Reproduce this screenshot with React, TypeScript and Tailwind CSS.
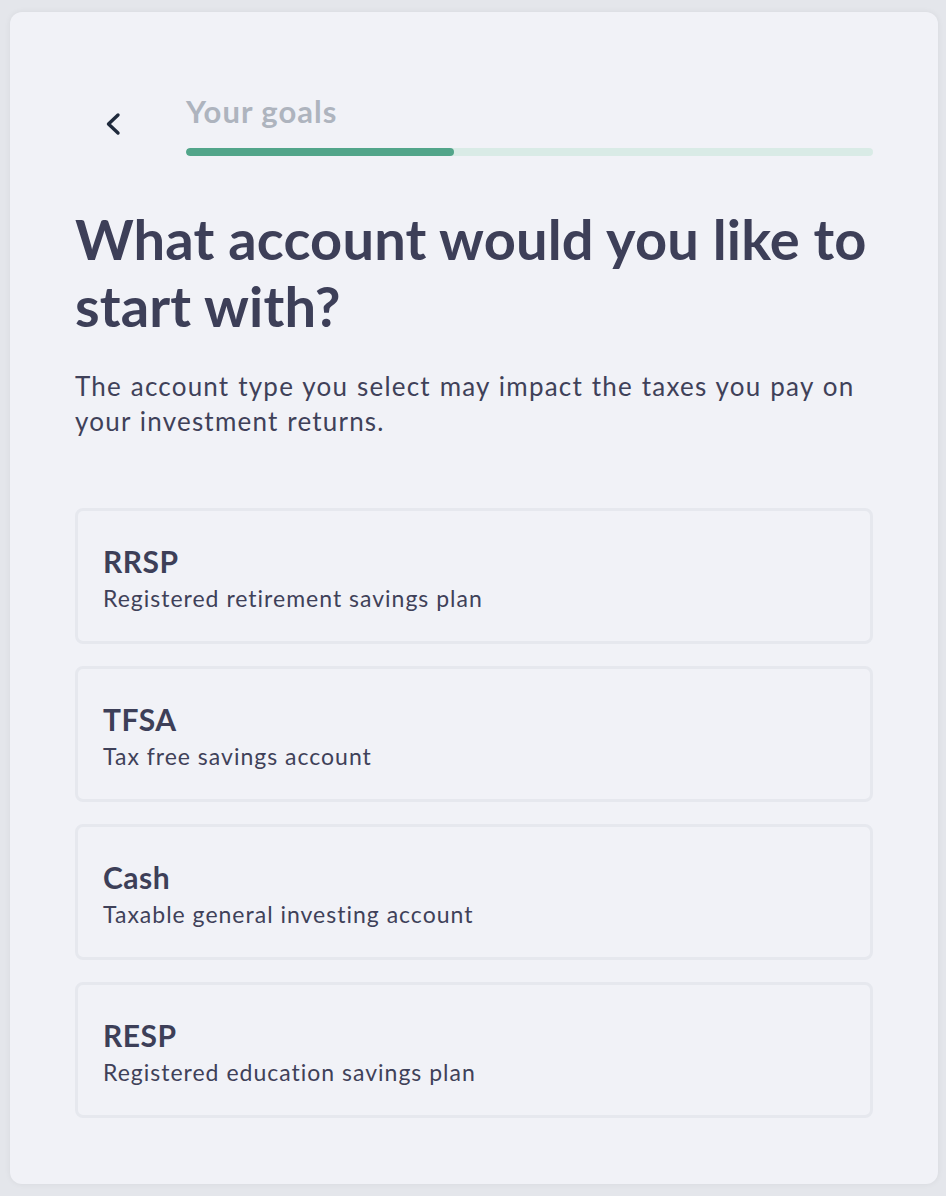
import React from "react";

const accounts = [
  { title: "RRSP", desc: "Registered retirement savings plan" },
  { title: "TFSA", desc: "Tax free savings account" },
  { title: "Cash", desc: "Taxable general investing account" },
  { title: "RESP", desc: "Registered education savings plan" },
];

export default function App() {
  return (
    <div
      className="min-h-[1196px] w-full bg-[#e4e6eb] pt-[12px] pl-[10px] pr-[8px] pb-[12px]"
      style={{ fontFamily: "Lato, 'Noto Sans', sans-serif" }}
    >
      <div className="h-[1172px] rounded-[12px] bg-[#f1f2f7] shadow-[0_0_6px_rgba(0,0,0,0.06)] px-[65px] pt-[81px]">
        <div className="flex items-start">
          <div className="w-[111px] flex pl-[30px] pt-[19px]">
            <svg width="16" height="24" viewBox="0 0 16 24" fill="none">
              <path d="M13 3 L3.5 12 L13 21" stroke="#1f2a3c" strokeWidth="3.4" strokeLinecap="round" strokeLinejoin="round" />
            </svg>
          </div>
          <div className="flex-1">
            <div className="text-[31px] leading-[36px] font-bold text-[#aeb4be] tracking-[1px]">Your goals</div>
            <div className="mt-[19px] h-[8px] rounded-full bg-[#d9ebe6] overflow-hidden">
              <div className="h-full w-[39%] bg-[#52a58a] rounded-full" />
            </div>
          </div>
        </div>
        <h1 className="mt-[49px] text-[56px] leading-[67px] font-bold text-[#3d3f58] tracking-[0.15px]">
          What account would you like to start with?
        </h1>
        <p className="mt-[30px] text-[26px] leading-[35px] text-[#3f4159] tracking-[1.2px] [word-spacing:1px]">
          The account type you select may impact the taxes you pay on your investment returns.
        </p>
        <div className="mt-[69px] flex flex-col gap-[22px]">
          {accounts.map((a) => (
            <div
              key={a.title}
              className="h-[136px] rounded-[8px] border-[3px] border-[#e6e8ee] px-[25px] pt-[32px]"
            >
              <div className="text-[30px] leading-[36px] font-bold text-[#3d3f58] tracking-[0.5px]">{a.title}</div>
              <div className="mt-[5px] text-[23px] leading-[28px] text-[#3f4159] tracking-[1px]">{a.desc}</div>
            </div>
          ))}
        </div>
      </div>
    </div>
  );
}
